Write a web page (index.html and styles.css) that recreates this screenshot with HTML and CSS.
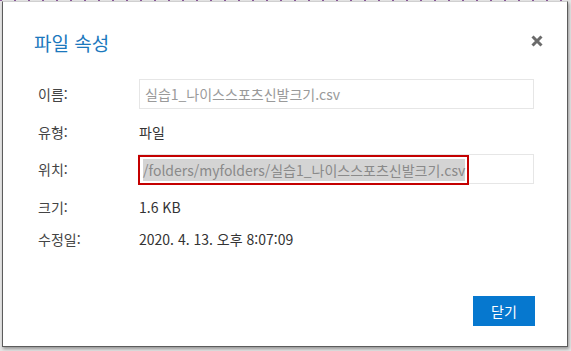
FILE: index.html
```html
<!DOCTYPE html>
<html lang="ko">
<head>
<meta charset="utf-8">
<title>파일 속성</title>
<link rel="stylesheet" href="styles.css">
</head>
<body>
<div class="dialog">
  <header class="head">
    <h1 class="title">파일 속성</h1>
    <button class="close" aria-label="닫기">
      <svg width="12" height="12" viewBox="0 0 12 12"><path d="M1.5 1.5 L10.5 10.5 M10.5 1.5 L1.5 10.5" stroke="#6b6b6b" stroke-width="3" fill="none"/></svg>
    </button>
  </header>
  <div class="props">
    <div class="label">이름:</div>
    <div class="field name">실습1_나이스스포츠신발크기.csv</div>
    <div class="label">유형:</div>
    <div class="value">파일</div>
    <div class="label">위치:</div>
    <div class="field loc"><span class="mark"><span class="sel">/folders/myfolders/실습1_나이스스포츠신발크기.csv</span></span></div>
    <div class="label">크기:</div>
    <div class="value">1.6 KB</div>
    <div class="label">수정일:</div>
    <div class="value">2020. 4. 13. 오후 8:07:09</div>
  </div>
  <footer class="foot">
    <button class="ok">닫기</button>
  </footer>
</div>
</body>
</html>
```
FILE: styles.css
```css
html, body {
  margin: 0;
  height: 100%;
}
body {
  background: #e6e6e6;
  background-image: repeating-linear-gradient(90deg, #8a5a9a 0 2px, transparent 2px 14px);
  background-size: 100% 1px;
  background-repeat: no-repeat;
  padding: 1px 3px 0 2px;
  box-sizing: border-box;
  font-family: "Noto Sans CJK KR", "Noto Sans", sans-serif;
  font-size: 14px;
  color: #333;
}
.dialog {
  width: 566px;
  height: 346px;
  box-sizing: border-box;
  background: #fff;
  border: 1px solid #5c5c5c;
  border-top-color: #d0d0d0;
  box-shadow: 1px 2px 3px rgba(0, 0, 0, 0.35);
  display: flex;
  flex-direction: column;
}
.head {
  display: flex;
  justify-content: space-between;
  align-items: flex-start;
  padding: 29px 24px 0 31px;
}
.title {
  margin: 0;
  font-size: 19px;
  font-weight: 400;
  line-height: 24px;
  color: #1b78bd;
}
.close {
  border: 0;
  background: none;
  padding: 0;
  margin-top: 4px;
  width: 12px;
  height: 12px;
  display: block;
}
.close svg { display: block; }
.props {
  display: grid;
  grid-template-columns: 100px 396px;
  grid-template-rows: 30px 21px 30px 21px 20px;
  row-gap: 12px;
  align-items: center;
  padding: 24px 0 0 35px;
}
.label {
  color: #444;
  line-height: 20px;
}
.value {
  color: #333;
  line-height: 20px;
  padding-left: 1px;
}
.field {
  height: 30px;
  box-sizing: border-box;
  border: 1px solid #e6e6e6;
  display: flex;
  align-items: center;
}
.field.name {
  padding-left: 5px;
  color: #9a9a9a;
  margin-left: 1px;
}
.field.loc {
  align-items: stretch;
}
.mark {
  margin: 0 0 -2px -1px;
  border: 2px solid #c40000;
  padding: 2px 2px 2px 3px;
  display: flex;
  align-items: center;
  box-sizing: border-box;
}
.sel {
  background: #d4d4d4;
  color: #8a8a8a;
  line-height: 22px;
  white-space: nowrap;
}
.foot {
  margin-top: auto;
  display: flex;
  justify-content: flex-end;
  padding: 0 32px 20px 0;
}
.ok {
  width: 62px;
  height: 30px;
  border: 0;
  background: #0678cf;
  color: #fff;
  font-family: inherit;
  font-size: 14px;
  padding: 0;
}
```
